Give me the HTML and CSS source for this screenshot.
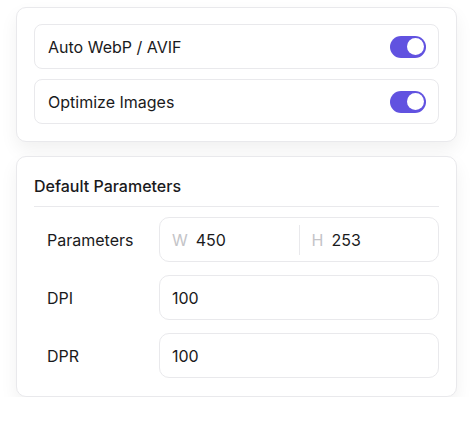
FILE: index.html
```html
<!DOCTYPE html>
<html lang="en">
<head>
<meta charset="UTF-8">
<meta name="viewport" content="width=device-width,initial-scale=1">
<title>Image Settings</title>
<link rel="stylesheet" href="styles.css">
</head>
<body>

<section class="card toggles">
  <div class="toggle-row">
    <span>Auto WebP / AVIF</span>
    <label class="switch"><input type="checkbox" checked><i></i></label>
  </div>
  <div class="toggle-row">
    <span>Optimize Images</span>
    <label class="switch"><input type="checkbox" checked><i></i></label>
  </div>
</section>

<section class="card params">
  <h2>Default Parameters</h2>
  <div class="field">
    <label>Parameters</label>
    <div class="box split">
      <div class="half"><span class="unit">W</span><input value="450"></div>
      <div class="half"><span class="unit">H</span><input value="253"></div>
    </div>
  </div>
  <div class="field">
    <label>DPI</label>
    <div class="box"><input value="100"></div>
  </div>
  <div class="field">
    <label>DPR</label>
    <div class="box"><input value="100"></div>
  </div>
</section>

</body>
</html>
```

FILE: styles.css
```css
:root{
  --text:    #1a1a1c;
  --muted:   #c4c4c8;
  --line:    #e9e9ec;
  --accent:  #6152e0;
  --radius:  10px;
  --shadow:  0 8px 18px rgba(0,0,0,.06);
}
*{box-sizing:border-box;margin:0;padding:0}
body{
  font-family:Inter,sans-serif;
  color:var(--text);
  background:#fff;
  padding:7px 17px 0 16px;
}

/* ---------- Cards ------------- */
.card{
  background:#fff;
  border:1px solid var(--line);
  border-radius:var(--radius);
  box-shadow:var(--shadow);
}
.toggles{
  display:flex;
  flex-direction:column;
  gap:10px;
  padding:16px 17px 17px;
}
.params{
  margin-top:14px;
  padding:0 17px 18px;
}

/* ---------- Toggles ----------- */
.toggle-row{
  display:flex;
  justify-content:space-between;
  align-items:center;
  height:45px;
  padding:0 12px 0 13px;
  border:1px solid var(--line);
  border-radius:8px;
  font-size:16px;
}
.switch{position:relative;display:block;width:36px;height:22px}
.switch input{display:none}
.switch i{
  position:absolute;inset:0;
  background:var(--accent);
  border-radius:11px;
}
.switch i::after{
  content:"";
  position:absolute;
  top:2.5px;right:2.5px;
  width:17px;height:17px;
  border-radius:50%;
  background:#fff;
}

/* ---------- Parameters -------- */
.params h2{
  font-size:16px;
  font-weight:500;
  line-height:24px;
  padding:17px 0 8px;
  border-bottom:1px solid var(--line);
  margin-bottom:10px;
}
.field{
  display:flex;
  align-items:center;
  margin-bottom:13px;
}
.field:last-child{margin-bottom:0}
.field label{
  width:125px;
  padding-left:13px;
  font-size:16px;
}
.box{
  flex:1;
  display:flex;
  align-items:center;
  height:45px;
  padding:0 12px;
  border:1px solid var(--line);
  border-radius:var(--radius);
}
.box input{
  border:none;outline:none;
  font:inherit;font-size:16px;
  color:var(--text);
  width:100%;
  background:none;
}
.split{padding:0}
.half{
  flex:1;
  display:flex;
  align-items:center;
  gap:8px;
  padding:0 12px;
  height:30px;
}
.half + .half{border-left:1px solid var(--line)}
.unit{color:var(--muted);font-size:16px}
```
